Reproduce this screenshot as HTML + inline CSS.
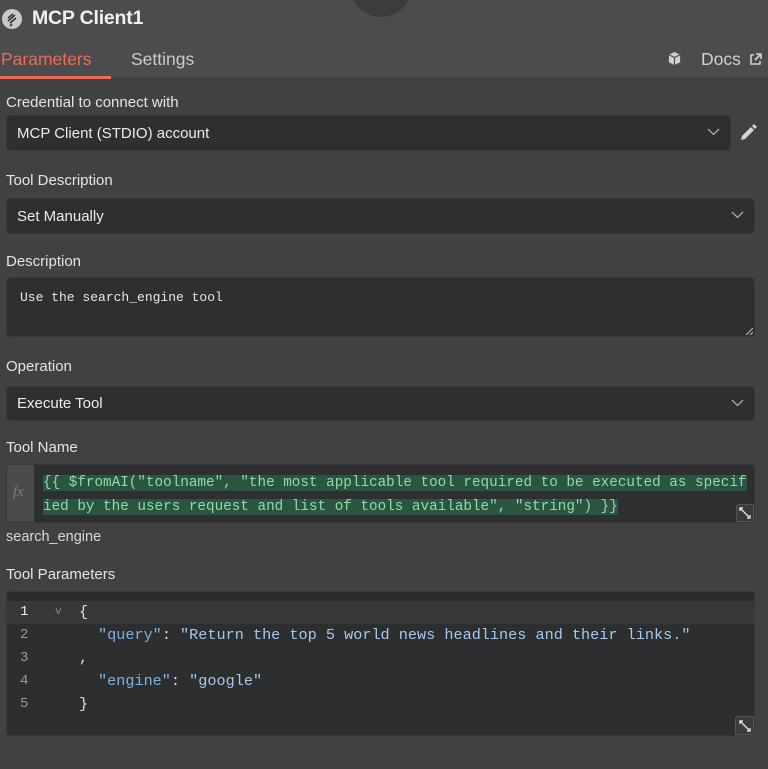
<!DOCTYPE html>
<html><head><meta charset="utf-8"><style>
*{box-sizing:border-box;margin:0;padding:0}
body{width:768px;height:769px;background:#414143;font-family:"Liberation Sans",sans-serif;color:#e6e6e6;position:relative;overflow:hidden}
.hdr{position:absolute;left:0;top:0;width:768px;height:79px;background:#4b4c4e;border-bottom:1px solid #3b3b3d}
.a{position:absolute}
.lbl{position:absolute;left:6px;font-size:15px;color:#e4e4e4}
.box{position:absolute;background:#2e2f30;border:1px solid #38393b;border-radius:4px}
.sel{font-size:15px;padding-left:10px;display:flex;align-items:center;color:#ececec}
.chev{position:absolute;right:10px;top:50%;margin-top:-5px}
.mono{font-family:"Liberation Mono",monospace}
.hl{background:#2c5541;color:#8fdcaa}
</style></head><body>
<div class="hdr"></div>
<div class="a" style="left:350px;top:-45px;width:62px;height:62px;border-radius:50%;background:#3c3c3e"></div>
<div class="a" style="left:2px;top:9px;width:20px;height:20px;border-radius:50%;background:#c8c8c8"></div>
<svg class="a" style="left:2px;top:9px" width="20" height="20" viewBox="0 0 20 20" fill="none" stroke="#333" stroke-width="1.6"><path d="M6 9l5-4M6 12l7-6M8 14l6-5M10 15l-2 2"/></svg>
<div class="a" style="left:32px;top:7px;font-size:19.5px;color:#f0f0f0;font-weight:bold;letter-spacing:-0.2px">MCP Client1</div>
<div class="a" style="left:1px;top:49px;font-size:17.5px;color:#ef6a52">Parameters</div>
<div class="a" style="left:0;top:76px;width:111px;height:3px;background:#ef6a52"></div>
<div class="a" style="left:131px;top:49px;font-size:17.5px;color:#c9cacc">Settings</div>
<svg class="a" style="left:667px;top:51px" width="15" height="15" viewBox="0 0 16 16"><path d="M8 1l6 3v8l-6 3-6-3V4z" fill="#d0d0d2"/><path d="M2 4l6 3 6-3M8 7v8" stroke="#4b4c4e" stroke-width="1.3" fill="none"/></svg>
<div class="a" style="left:701px;top:49px;font-size:17.5px;color:#d0d0d2">Docs</div>
<svg class="a" style="left:749px;top:53px" width="13" height="13" viewBox="0 0 13 13" fill="none" stroke="#d0d0d2" stroke-width="1.6"><path d="M5 2H2v9h9V8M7 1h5v5M12 1L6 7"/></svg>

<div class="lbl" style="top:94px">Credential to connect with</div>
<div class="box sel" style="left:6px;top:115px;width:725px;height:36px">MCP Client (STDIO) account<svg class="chev" width="13" height="8"><path d="M1 1l5.5 5.5L12 1" stroke="#aaa" fill="none" stroke-width="1.3"/></svg></div>
<svg class="a" style="left:738px;top:123px" width="20" height="20" viewBox="0 0 20 20"><path d="M3 17l1-4L13 4l3 3-9 9z M14 3l2-2 3 3-2 2z" fill="#d6d6d6"/></svg>

<div class="lbl" style="top:172px">Tool Description</div>
<div class="box sel" style="left:6px;top:198px;width:749px;height:36px">Set Manually<svg class="chev" width="13" height="8"><path d="M1 1l5.5 5.5L12 1" stroke="#aaa" fill="none" stroke-width="1.3"/></svg></div>

<div class="lbl" style="top:253px">Description</div>
<div class="box" style="left:6px;top:277px;width:749px;height:60px"><div class="mono" style="position:absolute;left:13px;top:12px;font-size:13px;color:#e8e8e8">Use the search_engine tool</div>
<svg class="a" style="right:1px;bottom:1px" width="7" height="7"><path d="M7 0L0 7M7 4L4 7" stroke="#bbb"/></svg></div>

<div class="lbl" style="top:358px">Operation</div>
<div class="box sel" style="left:6px;top:386px;width:749px;height:35px">Execute Tool<svg class="chev" width="13" height="8"><path d="M1 1l5.5 5.5L12 1" stroke="#aaa" fill="none" stroke-width="1.3"/></svg></div>

<div class="lbl" style="top:439px">Tool Name</div>
<div class="box" style="left:6px;top:464px;width:749px;height:59px;overflow:hidden">
<div class="a" style="left:0;top:0;width:27px;height:59px;background:#4a4b4d"></div>
<div class="a" style="left:6px;top:19px;font-family:'Liberation Serif',serif;font-style:italic;font-size:15px;color:#7b7c7e">fx</div>
<div class="mono a" style="left:36px;top:6px;font-size:14.3px;line-height:24px;color:#8fdcaa;white-space:pre"><span class="hl">{{ $fromAI("toolname", "the most applicable tool required to be executed as specif</span>
<span class="hl">ied by the users request and list of tools available", "string") }}</span></div>
<div class="a" style="right:0;bottom:0;width:18px;height:18px;background:#3a3b3d;border:1px solid #555;border-radius:3px 0 0 0"></div>
<svg class="a" style="right:3px;bottom:3px" width="12" height="12" viewBox="0 0 12 12" fill="none" stroke="#ddd" stroke-width="1.4"><path d="M1 4V1h3M1 1l9 9M11 8v3H8"/></svg>
</div>
<div class="a" style="left:6px;top:529px;font-size:14.5px;color:#d8d8d8">search_engine</div>

<div class="lbl" style="top:566px">Tool Parameters</div>
<div class="box" style="left:6px;top:591px;width:749px;height:145px;overflow:hidden;background:#2d2e2f">
<div class="a" style="left:0;top:0;width:749px;height:9px;background:#2a2b2c"></div>
<div class="a" style="left:0;top:9px;width:749px;height:23px;background:#373839"></div>
<div class="mono a" style="left:0;top:9px;font-size:15.2px;line-height:23px;white-space:pre;color:#e0e0e0">
<div style="position:absolute;left:13px;top:0;color:#eee;font-size:14px">1</div><div style="position:absolute;left:13px;top:23px;color:#999;font-size:14px">2</div><div style="position:absolute;left:13px;top:46px;color:#999;font-size:14px">3</div><div style="position:absolute;left:13px;top:69px;color:#999;font-size:14px">4</div><div style="position:absolute;left:13px;top:92px;color:#999;font-size:14px">5</div>
<div style="position:absolute;left:48px;top:0;color:#888;font-size:11px">v</div>
<div style="position:absolute;left:72px;top:0">{</div>
<div style="position:absolute;left:91px;top:23px"><span style="color:#7fb2e5">"query"</span>: <span style="color:#a7c8ee">"Return the top 5 world news headlines and their links."</span></div>
<div style="position:absolute;left:72px;top:46px">,</div>
<div style="position:absolute;left:91px;top:69px"><span style="color:#7fb2e5">"engine"</span>: <span style="color:#a7c8ee">"google"</span></div>
<div style="position:absolute;left:72px;top:92px">}</div>
</div>
<div class="a" style="right:0;bottom:0;width:19px;height:19px;background:#3a3b3d;border:1px solid #555;border-radius:3px 0 0 0"></div>
<svg class="a" style="right:3px;bottom:3px" width="12" height="12" viewBox="0 0 12 12" fill="none" stroke="#ddd" stroke-width="1.4"><path d="M1 4V1h3M1 1l9 9M11 8v3H8"/></svg>
</div>
</body></html>
